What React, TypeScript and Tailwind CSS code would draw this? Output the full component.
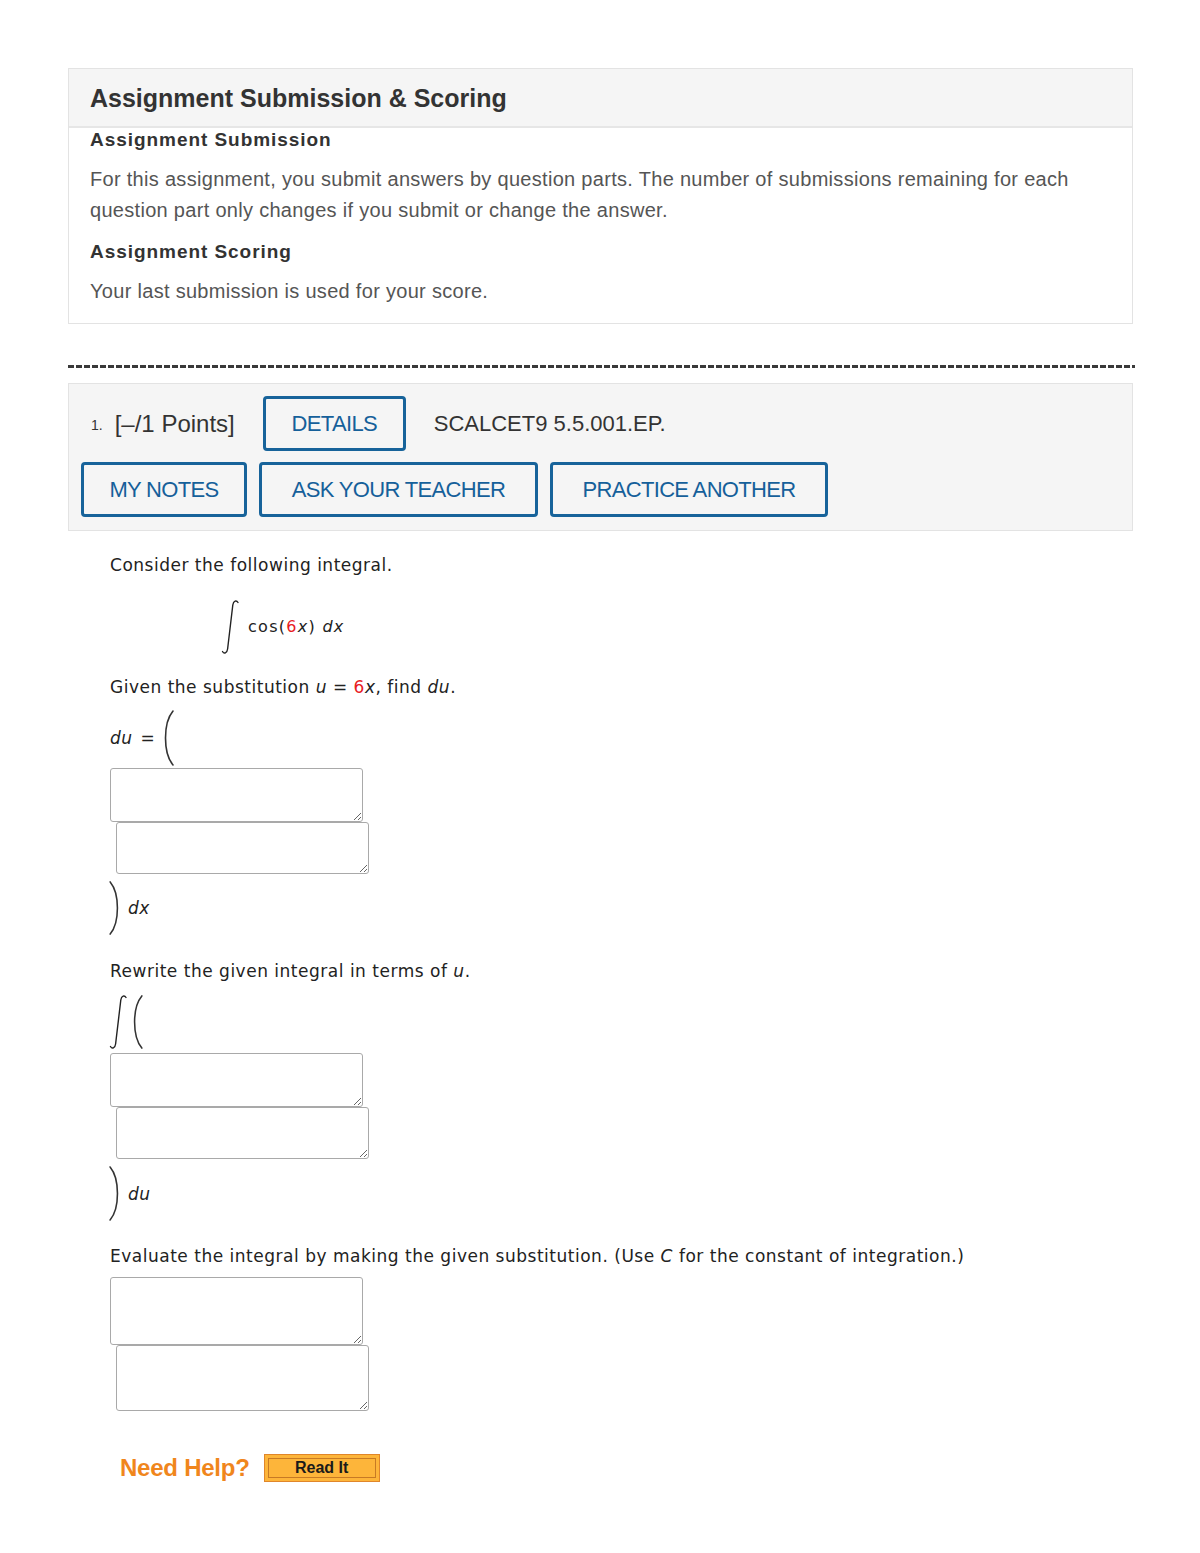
import React from 'react';

// Assignment page: submission rules panel, question header and the
// substitution exercise with its answer boxes.

const arial = "font-['Liberation_Sans',Arial,sans-serif]";
const verdana = "font-['DejaVu_Sans',Verdana,sans-serif]";

const IntegralSign: React.FC<{ className?: string }> = ({ className }) => (
  <svg viewBox="0 0 20 56" className={className} fill="none" stroke="#222" strokeWidth={1.4} strokeLinecap="round">
    <path d="M18 3.5 C16.5 1 13.5 1.5 12.8 6 L7.6 50 C7 54.5 4 55 2.5 52.5" />
  </svg>
);

const Paren: React.FC<{ right?: boolean; className?: string }> = ({ right, className }) => (
  <svg viewBox="0 0 14 58" className={className} fill="none" stroke="#333" strokeWidth={1.6} strokeLinecap="round">
    {right ? <path d="M2 2 C12 14 12 44 2 56" /> : <path d="M12 2 C2 14 2 44 12 56" />}
  </svg>
);

const AnswerBox: React.FC<{ h: string; offset?: boolean }> = ({ h, offset }) => (
  <textarea
    className={`block w-[253px] ${h} ${offset ? 'ml-[6px]' : ''} resize rounded-[3px] border border-[#a9a9a9] bg-white`}
  />
);

const OutlineButton: React.FC<{ label: string; w: string }> = ({ label, w }) => (
  <button
    className={`${w} h-[55px] rounded-[4px] border-[3px] border-[#17639a] text-[22px] tracking-[-0.03em] text-[#15609a] ${arial}`}
  >
    {label}
  </button>
);

const policy = [
  {
    title: 'Assignment Submission',
    body: 'For this assignment, you submit answers by question parts. The number of submissions remaining for each question part only changes if you submit or change the answer.',
  },
  {
    title: 'Assignment Scoring',
    body: 'Your last submission is used for your score.',
  },
];

export default function App() {
  return (
    <div className="min-h-[1553px] bg-white pl-[68px] pr-[65px] pt-[68px]">
      {/* Submission & scoring rules */}
      <section className="w-[1065px] border border-[#e3e3e3]">
        <header className="h-[59px] border-b-2 border-[#e6e6e6] bg-[#f5f5f5] pl-[21px]">
          <h1 className={`pt-[14px] text-[25px] font-bold leading-[30px] text-[#333] ${arial}`}>
            Assignment Submission &amp; Scoring
          </h1>
        </header>
        <div className="pl-[21px] pb-[16px]">
          {policy.map((p, i) => (
            <div key={p.title} className={i ? 'mt-[14px]' : ''}>
              <h2 className={`text-[19px] font-bold leading-[24px] tracking-[0.05em] text-[#333] ${arial}`}>{p.title}</h2>
              <p className={`mt-[12px] max-w-[1010px] text-[20px] leading-[31px] tracking-[0.015em] text-[#555] ${arial}`}>
                {p.body}
              </p>
            </div>
          ))}
        </div>
      </section>

      <div className="mt-[41px] h-[3px] w-[1067px] bg-[repeating-linear-gradient(90deg,#3a3a3a_0_6px,transparent_6px_8px)]" />

      {/* Question header */}
      <section className="mt-[15px] w-[1065px] border border-[#e3e3e3] bg-[#f5f5f5] pb-[13px] pl-[12px] pt-[12px]">
        <div className="flex items-center">
          <span className={`ml-[10px] mt-[4px] text-[14px] text-[#333] ${arial}`}>1.</span>
          <span className={`ml-[12px] text-[24px] text-[#333] ${arial}`}>[–/1 Points]</span>
          <button
            className={`ml-[28px] h-[55px] w-[143px] rounded-[4px] border-[3px] border-[#17639a] text-[22px] tracking-[-0.03em] text-[#15609a] ${arial}`}
          >
            DETAILS
          </button>
          <span className={`ml-[28px] text-[22px] tracking-[0em] text-[#333] ${arial}`}>SCALCET9 5.5.001.EP.</span>
        </div>
        <div className="mt-[11px] flex gap-[12px]">
          <OutlineButton label="MY NOTES" w="w-[166px]" />
          <OutlineButton label="ASK YOUR TEACHER" w="w-[279px]" />
          <OutlineButton label="PRACTICE ANOTHER" w="w-[278px]" />
        </div>
      </section>

      {/* Question body */}
      <div className={`pl-[42px] text-[17px] leading-[20px] tracking-[0.03em] text-[#222] ${verdana}`}>
        <p className="mt-[24px]">Consider the following integral.</p>

        <div className="mt-[24px] flex items-center pl-[110px]">
          <IntegralSign className="h-[56px] w-[20px]" />
          <span className="ml-[8px] text-[16px] tracking-[0.08em]">
            cos(<span className="text-[#e8201f]">6</span><i>x</i>) <i>dx</i>
          </span>
        </div>

        <p className="mt-[22px]">
          Given the substitution <i>u</i> = <span className="text-[#e8201f]">6</span><i>x</i>, find <i>du</i>.
        </p>

        <div className="mt-[12px] flex items-center">
          <i>du</i>
          <span className="ml-[8px]">=</span>
          <Paren className="ml-[6px] h-[58px] w-[14px]" />
        </div>
        <div className="mt-[1px]">
          <AnswerBox h="h-[54px]" />
          <AnswerBox h="h-[52px]" offset />
        </div>
        <div className="mt-[6px] flex items-center">
          <Paren right className="-ml-[2px] h-[56px] w-[14px]" />
          <i className="ml-[6px]">dx</i>
        </div>

        <p className="mt-[25px]">Rewrite the given integral in terms of <i>u</i>.</p>

        <div className="mt-[13px] flex items-center">
          <IntegralSign className="-ml-[2px] h-[56px] w-[20px]" />
          <Paren className="ml-[1px] h-[56px] w-[16px]" />
        </div>
        <div className="mt-[3px]">
          <AnswerBox h="h-[54px]" />
          <AnswerBox h="h-[52px]" offset />
        </div>
        <div className="mt-[6px] flex items-center">
          <Paren right className="-ml-[2px] h-[57px] w-[14px]" />
          <i className="ml-[6px]">du</i>
        </div>

        <p className="mt-[24px]">
          Evaluate the integral by making the given substitution. (Use <i>C</i> for the constant of integration.)
        </p>
        <div className="mt-[11px]">
          <AnswerBox h="h-[68px]" />
          <AnswerBox h="h-[66px]" offset />
        </div>

        {/* Help links */}
        <div className="mt-[43px] flex items-center pl-[10px]">
          <span className={`text-[24px] font-bold tracking-[-0.01em] text-[#f0861c] ${arial}`}>Need Help?</span>
          <button className="ml-[14px] h-[28px] w-[116px] border border-[#e0862a] bg-[#fdb53a] p-[3px]">
            <span
              className={`flex h-full w-full items-center justify-center border border-[#c77a24] text-[16px] font-bold tracking-normal text-[#1a1a1a] ${arial}`}
            >
              Read It
            </span>
          </button>
        </div>
      </div>
    </div>
  );
}
